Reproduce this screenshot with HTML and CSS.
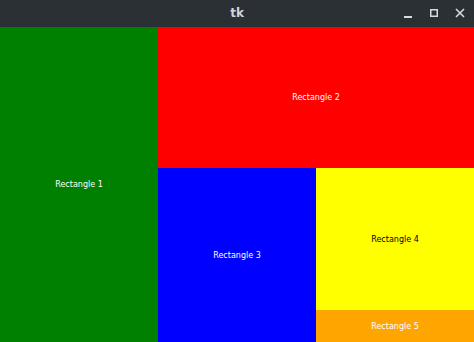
FILE: index.html
```html
<!DOCTYPE html>
<html>
<head>
<meta charset="utf-8">
<link rel="stylesheet" href="styles.css">
</head>
<body>
<div class="window">
  <div class="titlebar">
    <div class="title">tk</div>
    <div class="controls">
      <svg class="ctl" width="12" height="12" viewBox="0 0 12 12"><rect x="2" y="9" width="8" height="2" fill="#d8dadc"/></svg>
      <svg class="ctl" width="12" height="12" viewBox="0 0 12 12"><rect x="2.75" y="2.75" width="6.5" height="6.5" fill="none" stroke="#d8dadc" stroke-width="1.5"/></svg>
      <svg class="ctl" width="12" height="12" viewBox="0 0 12 12"><path d="M2 2 L10 10 M10 2 L2 10" stroke="#d8dadc" stroke-width="1.6" fill="none"/></svg>
    </div>
  </div>
  <div class="canvas">
    <div class="rect r1">Rectangle 1</div>
    <div class="rect r2">Rectangle 2</div>
    <div class="rect r3">Rectangle 3</div>
    <div class="rect r4">Rectangle 4</div>
    <div class="rect r5">Rectangle 5</div>
  </div>
</div>
</body>
</html>
```
FILE: styles.css
```css
html, body {
  margin: 0;
  padding: 0;
  width: 474px;
  height: 342px;
  overflow: hidden;
  background: #2b3035;
}
.window {
  width: 474px;
  height: 342px;
  display: flex;
  flex-direction: column;
  font-family: "DejaVu Sans", sans-serif;
}
.titlebar {
  height: 27px;
  background: #2b3035;
  display: flex;
  align-items: center;
  justify-content: center;
  position: relative;
}
.title {
  color: #d3d5d7;
  font-weight: bold;
  font-size: 12px;
  margin-top: -1px;
}
.controls {
  position: absolute;
  right: 8px;
  top: 7px;
  display: flex;
  gap: 14px;
}
.ctl {
  display: block;
}
.canvas {
  flex: 1;
  display: grid;
  grid-template-columns: 158px 158px 158px;
  grid-template-rows: 141px 142px 32px;
}
.rect {
  display: flex;
  align-items: center;
  justify-content: center;
  font-size: 8px;
  color: #ffffff;
}
.r1 { grid-column: 1; grid-row: 1 / 4; background: #008000; }
.r2 { grid-column: 2 / 4; grid-row: 1; background: #ff0000; }
.r3 { grid-column: 2; grid-row: 2 / 4; background: #0000ff; }
.r4 { grid-column: 3; grid-row: 2; background: #ffff00; color: #000000; }
.r5 { grid-column: 3; grid-row: 3; background: #ffa500; }
```
